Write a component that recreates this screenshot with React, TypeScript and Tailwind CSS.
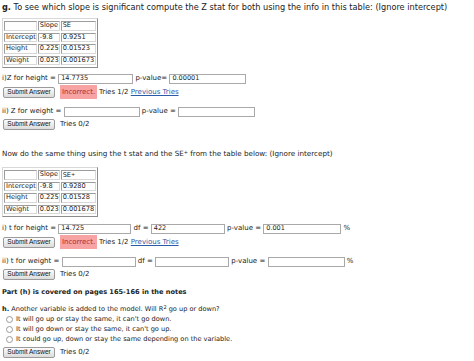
import React from "react";

const font = { fontFamily: '"DejaVu Sans", Verdana, sans-serif' };

function Input({ w, value }: { w: number; value?: string }) {
  return (
    <span
      className="inline-flex items-center h-[10px] border border-[#a9a9a9] bg-white pl-[2px] text-[6.5px] text-[#222] align-middle"
      style={{ width: w }}
    >
      {value}
    </span>
  );
}

function SubmitBtn() {
  return (
    <span className="inline-flex items-center justify-center h-[11px] w-[52px] rounded-[2px] border border-[#9a9a9a] bg-gradient-to-b from-[#fbfbfb] to-[#dcdcdc] text-[6.5px] text-[#111] [font-family:'Liberation_Sans',Arial,sans-serif]">
      Submit Answer
    </span>
  );
}

function Incorrect() {
  return (
    <span className="inline-flex items-center justify-center h-[14px] w-[37px] bg-[#f7a3a3] text-[#b02a2a]">
      Incorrect.
    </span>
  );
}

function DataTable({ second }: { second?: boolean }) {
  const rows = second
    ? [
        ["Intercept", "-9.8", "0.9280"],
        ["Height", "0.225", "0.01528"],
        ["Weight", "0.023", "0.001678"],
      ]
    : [
        ["Intercept", "-9.8", "0.9251"],
        ["Height", "0.225", "0.01523"],
        ["Weight", "0.023", "0.001673"],
      ];
  const cell =
    "border border-t-[#9c9c9c] border-l-[#9c9c9c] border-b-[#d8d8d8] border-r-[#d8d8d8] h-[9.5px] p-0 pl-[1px] leading-none text-left align-middle";
  return (
    <table className="text-[6.6px] border-separate border-spacing-x-[1px] border-spacing-y-[2px] border border-t-[#d8d8d8] border-l-[#d8d8d8] border-b-[#8c8c8c] border-r-[#8c8c8c]">
      <tbody>
        <tr>
          <td className={cell + " w-[31px]"}></td>
          <td className={cell + " w-[19px]"}>Slope</td>
          <td className={cell + " w-[35px]"}>
            {second ? (
              <span className="relative top-[1px]">
                SE<sup className="text-[5px] relative -top-[1px]">+</sup>
              </span>
            ) : (
              "SE"
            )}
          </td>
        </tr>
        {rows.map((r) => (
          <tr key={r[0]}>
            <td className={cell}>{r[0]}</td>
            <td className={cell}>{r[1]}</td>
            <td className={cell}>{r[2]}</td>
          </tr>
        ))}
      </tbody>
    </table>
  );
}

function Radio({ label }: { label: string }) {
  return (
    <div className="flex items-center h-[10px] text-[6.6px]">
      <span className="ml-[4px] w-[7px] h-[7px] rounded-full border border-[#9a9a9a] bg-white" />
      <span className="ml-[3px]">{label}</span>
    </div>
  );
}

export default function App() {
  return (
    <div
      className="w-[474px] h-[361px] bg-white text-[7px] leading-none text-[#222] px-[2px] pt-[2px] overflow-hidden whitespace-pre"
      style={font}
    >
      <div className="h-[10px] flex items-center text-[8.2px]">
        <b>g.</b> To see which slope is significant compute the Z stat for both using the info in this table: (Ignore intercept)
      </div>
      <div className="mt-[6px]">
        <DataTable />
      </div>
      <div className="mt-[5px] h-[11px] flex items-center">
        i)Z for height = <Input w={75} value="14.7735" /> p-value= <Input w={77} value="0.00001" />
      </div>
      <div className="mt-[1px] h-[14px] flex items-center pl-[1px]">
        <SubmitBtn />
        <span className="ml-[5px]" />
        <Incorrect />
        <span className="ml-[2px]">Tries 1/2 </span>
        <span className="text-[#2a5aa8] underline">Previous Tries</span>
      </div>
      <div className="mt-[7px] h-[11px] flex items-center">
        ii) Z for weight = <Input w={76} /> p-value = <Input w={77} />
      </div>
      <div className="mt-[1px] h-[13px] flex items-center pl-[1px]">
        <SubmitBtn />
        <span className="ml-[5px]">Tries 0/2</span>
      </div>
      <div className="mt-[18px] h-[10px] flex items-center text-[7.2px]">
        Now do the same thing using the t stat and the SE<sup className="text-[5px]">+</sup> from the table below: (Ignore intercept)
      </div>
      <div className="mt-[8px]">
        <DataTable second />
      </div>
      <div className="mt-[6px] h-[11px] flex items-center">
        i) t for height = <Input w={73} value="14.725" /> df = <Input w={74} value="422" /> p-value = <Input w={78} value="0.001" /> %
      </div>
      <div className="mt-[1px] h-[14px] flex items-center pl-[1px]">
        <SubmitBtn />
        <span className="ml-[5px]" />
        <Incorrect />
        <span className="ml-[2px]">Tries 1/2 </span>
        <span className="text-[#2a5aa8] underline">Previous Tries</span>
      </div>
      <div className="mt-[7px] h-[11px] flex items-center">
        ii) t for weight = <Input w={74} /> df = <Input w={74} /> p-value = <Input w={77} /> %
      </div>
      <div className="mt-[1px] h-[13px] flex items-center pl-[1px]">
        <SubmitBtn />
        <span className="ml-[5px]">Tries 0/2</span>
      </div>
      <div className="mt-[6px] h-[10px] flex items-center font-bold text-[6.6px]">
        Part (h) is covered on pages 165-166 in the notes
      </div>
      <div className="mt-[7px] h-[10px] flex items-center text-[6.6px]">
        <b>h.</b> Another variable is added to the model. Will R<sup className="text-[5px]">2</sup> go up or down?
      </div>
      <Radio label="It will go up or stay the same, it can't go down." />
      <Radio label="It will go down or stay the same, it can't go up." />
      <Radio label="It could go up, down or stay the same depending on the variable." />
      <div className="mt-[2px] h-[13px] flex items-center pl-[1px]">
        <SubmitBtn />
        <span className="ml-[5px]">Tries 0/2</span>
      </div>
    </div>
  );
}
